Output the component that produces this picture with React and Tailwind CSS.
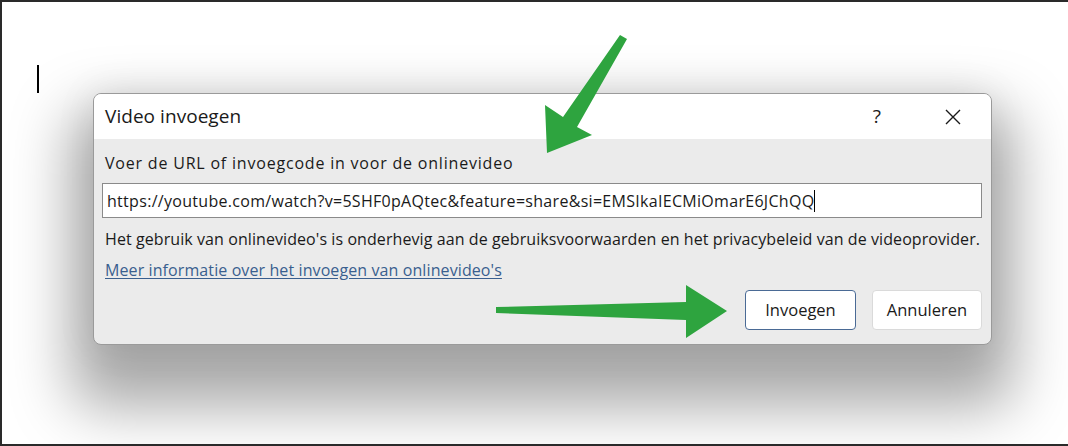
export default function App() {
  const font = { fontFamily: '"Open Sans", "Noto Sans", sans-serif' };

  return (
    <div className="relative w-[1068px] h-[446px] overflow-hidden bg-white border-t-2 border-l-2 border-b-2 border-[#2a2a2a]" style={font}>
      {/* document caret */}
      <div className="ml-[35px] mt-[63px] w-[2px] h-[28px] bg-black"></div>

      {/* dialog */}
      <div className="ml-[91px] w-[899px] rounded-[8px] border border-[#9a9a9a] bg-[#ebebeb] shadow-[0_40px_60px_22px_rgba(0,0,0,0.34),0_0_40px_rgba(0,0,0,0.08)] overflow-hidden">
        <div className="flex items-center h-[45px] bg-white pl-[11px]">
          <span className="text-[19px] text-[#1a1a1a] tracking-[0.05px]">Video invoegen</span>
          <span className="ml-auto text-[19px] text-[#1a1a1a]">?</span>
          <div className="w-[75px] flex justify-center mr-[1px] ml-[34px]">
            <svg width="18" height="18" viewBox="0 0 18 18">
              <path d="M2 2 L16 16 M16 2 L2 16" stroke="#1a1a1a" strokeWidth="1.4" fill="none" />
            </svg>
          </div>
        </div>

        <div className="flex flex-col pl-[8px] pr-[9px] pb-[14px]">
          <div className="pl-[3px] pt-[13px] text-[16px] leading-[22px] text-[#1a1a1a] tracking-[0.8px]">
            Voer de URL of invoegcode in voor de onlinevideo
          </div>
          <div className="mt-[9px] h-[35px] w-[880px] bg-white border border-[#8a8a8a] flex items-center pl-[4px] text-[16px] text-[#1a1a1a] tracking-[0.3px]">
            <span>https://youtube.com/watch?v=5SHF0pAQtec&amp;feature=share&amp;si=EMSIkaIECMiOmarE6JChQQ</span>
            <span className="w-[1px] h-[22px] bg-black"></span>
          </div>
          <div className="pl-[3px] mt-[10px] text-[16px] leading-[22px] text-[#1a1a1a] tracking-[0.08px] whitespace-nowrap">
            Het gebruik van onlinevideo's is onderhevig aan de gebruiksvoorwaarden en het privacybeleid van de videoprovider.
          </div>
          <div className="pl-[3px] mt-[9px] text-[16px] leading-[22px] text-[#3a5f8f] underline underline-offset-2 tracking-[0.1px]">
            Meer informatie over het invoegen van onlinevideo's
          </div>
          <div className="flex justify-end gap-[16px] mt-[9px]">
            <button className="w-[111px] h-[40px] rounded-[4px] bg-white border border-[#4a6a95] text-[16.5px] text-[#1a1a1a]">
              Invoegen
            </button>
            <button className="w-[110px] h-[40px] rounded-[4px] bg-white border border-[#dadada] text-[16.5px] text-[#1a1a1a]">
              Annuleren
            </button>
          </div>
        </div>
      </div>

      {/* annotation arrows */}
      <svg className="absolute left-0 top-0 pointer-events-none" width="1068" height="446" viewBox="0 0 1068 446">
        <polygon
          points="620,35 627,39 577,127 592,135 547,153 545,105 563,117"
          fill="#2ea43f"
          transform="translate(-2,-2)"
        />
        <polygon
          points="496,307 686,302 686,285 727,311 686,338 686,320 496,313"
          fill="#2ea43f"
          transform="translate(-2,-2)"
        />
      </svg>
    </div>
  );
}
